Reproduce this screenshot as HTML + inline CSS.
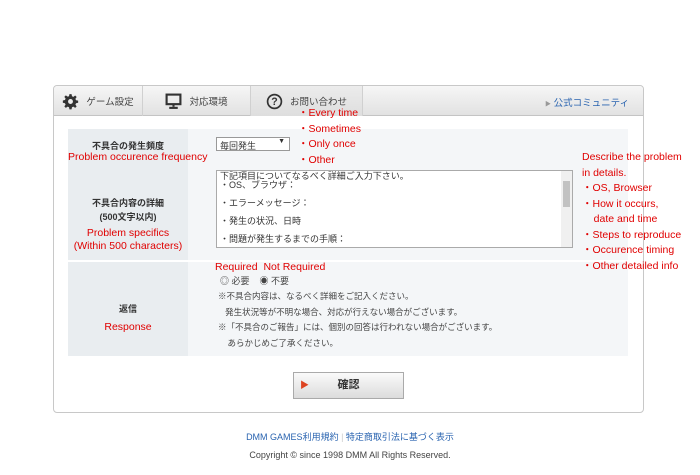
<!DOCTYPE html>
<html><head><meta charset="utf-8"><style>
*{margin:0;padding:0;box-sizing:border-box}
body{width:700px;height:475px;background:#fff;position:relative;font-family:"Liberation Sans","Noto Sans CJK JP",sans-serif;font-size:9px;color:#333;overflow:hidden}
.abs{position:absolute}
.box{left:53px;top:85px;width:591px;height:328px;border:1px solid #c8c8c8;border-radius:4px}
.bar{left:54px;top:86px;width:589px;height:30px;background:linear-gradient(#f6f6f6,#e2e2e2);border-bottom:1px solid #c4c4c4;border-radius:4px 4px 0 0}
.tab{top:86px;height:30px;border-right:1px solid #d0d0d0;display:flex;align-items:center;justify-content:center;gap:7px;font-size:9.5px;color:#444}
.red{color:#e00000;font-size:10.5px;position:absolute;white-space:nowrap}
.lab{background:#e9edf0;position:absolute;left:68px;width:120px;text-align:center;font-weight:bold;font-size:9px}
.val{background:#f4f6f8;position:absolute;left:188px;width:440px}
</style></head><body>
<div class="abs box"></div>
<div class="abs bar"></div>
<div class="abs tab" style="left:54px;width:89px"><svg width="17" height="17" viewBox="0 0 16 16"><path fill="#333" d="M7 1h2l.4 2 1.3.6 1.7-1.2 1.4 1.4-1.2 1.7.6 1.3 2 .4v2l-2 .4-.6 1.3 1.2 1.7-1.4 1.4-1.7-1.2-1.3.6-.4 2H7l-.4-2-1.3-.6-1.7 1.2-1.4-1.4 1.2-1.7-.6-1.3-2-.4V7l2-.4.6-1.3-1.2-1.7 1.4-1.4 1.7 1.2L6.6 3z"/><circle cx="8" cy="8" r="2.3" fill="#eee"/></svg>ゲーム設定</div>
<div class="abs tab" style="left:143px;width:108px"><svg width="17" height="17" viewBox="0 0 16 16"><rect x="1.5" y="1.5" width="13" height="9" fill="none" stroke="#333" stroke-width="2"/><rect x="7" y="11" width="2" height="2" fill="#333"/><rect x="4" y="13" width="8" height="2" fill="#333"/></svg>対応環境</div>
<div class="abs tab" style="left:251px;width:112px;background:linear-gradient(#ececec,#dedede)"><svg width="17" height="17" viewBox="0 0 16 16"><circle cx="8" cy="8" r="6.5" fill="none" stroke="#333" stroke-width="1.6"/><text x="8" y="11.5" font-size="10" font-weight="bold" text-anchor="middle" fill="#333" font-family="Liberation Sans">?</text></svg>お問い合わせ</div>
<div class="abs" style="left:545px;top:95px;color:#2a64b0;font-size:9.5px"><span style="color:#999;font-size:6px">▶</span> 公式コミュニティ</div>

<div class="lab" style="top:129px;height:36px;padding-top:10px">不具合の発生頻度</div>
<div class="val" style="top:129px;height:36px"></div>
<div class="lab" style="top:165px;height:95px;padding-top:31px;line-height:14px">不具合内容の詳細<br>(500文字以内)</div>
<div class="val" style="top:165px;height:95px"></div>
<div class="lab" style="top:262px;height:94px;padding-top:40px">返信</div>
<div class="val" style="top:262px;height:94px"></div>

<div class="abs" style="left:216px;top:137px;width:74px;height:14px;border:1px solid #999;background:#fff;font-size:9px;padding:1px 3px">毎回発生<span style="position:absolute;right:4px;top:0;font-size:7px">▼</span></div>
<div class="abs" style="left:216px;top:170px;width:357px;height:78px;border:1px solid #aaa;background:#fff;font-size:9px;line-height:9px;padding:1px 3px;overflow:hidden">下記項目についてなるべく詳細ご入力下さい。<br>・OS、ブラウザ：<br><br>・エラーメッセージ：<br><br>・発生の状況、日時<br><br>・問題が発生するまでの手順：
<div style="position:absolute;right:0;top:0;width:11px;height:76px;background:#f0f0f0"><div style="margin:10px 2px;height:26px;background:#c2c2c2"></div></div></div>

<div class="abs" style="left:220px;top:274px;font-size:9px;color:#444">◎ 必要 &nbsp;&nbsp; ◉ 不要</div>
<div class="abs" style="left:218px;top:289px;font-size:8.5px;line-height:15.5px;color:#444">※不具合内容は、なるべく詳細をご記入ください。<br>&nbsp;&nbsp;&nbsp;発生状況等が不明な場合、対応が行えない場合がございます。<br>※「不具合のご報告」には、個別の回答は行われない場合がございます。<br>&nbsp;&nbsp;&nbsp;&nbsp;あらかじめご了承ください。</div>

<div class="abs" style="left:293px;top:372px;width:111px;height:27px;border:1px solid #aaa;background:linear-gradient(#fafafa,#dcdcdc);font-weight:bold;font-size:11px;text-align:center;line-height:25px">確認<span style="position:absolute;left:6px;top:0;color:#d42;font-size:9px">▶</span></div>

<div class="abs" style="left:0;width:700px;top:430px;text-align:center;color:#2a64b0;font-size:9px">DMM GAMES利用規約 <span style="color:#ccc">|</span> 特定商取引法に基づく表示</div>
<div class="abs" style="left:0;width:700px;top:450px;text-align:center;color:#444;font-size:9px">Copyright © since 1998 DMM All Rights Reserved.</div>

<div class="red" style="left:298px;top:106px;line-height:15.5px">・Every time<br>・Sometimes<br>・Only once<br>・Other</div>
<div class="red" style="left:68px;top:151px">Problem occurence frequency</div>
<div class="red" style="left:68px;width:120px;text-align:center;top:227px;line-height:13px">Problem specifics<br>(Within 500 characters)</div>
<div class="red" style="left:215px;top:261px">Required &nbsp;Not Required</div>
<div class="red" style="left:68px;width:120px;text-align:center;top:321px">Response</div>
<div class="red" style="left:582px;top:150px;line-height:15.5px">Describe the problem<br>in details.<br>・OS, Browser<br>・How it occurs,<br>&nbsp;&nbsp;&nbsp;&nbsp;date and time<br>・Steps to reproduce<br>・Occurence timing<br>・Other detailed info</div>
</body></html>
